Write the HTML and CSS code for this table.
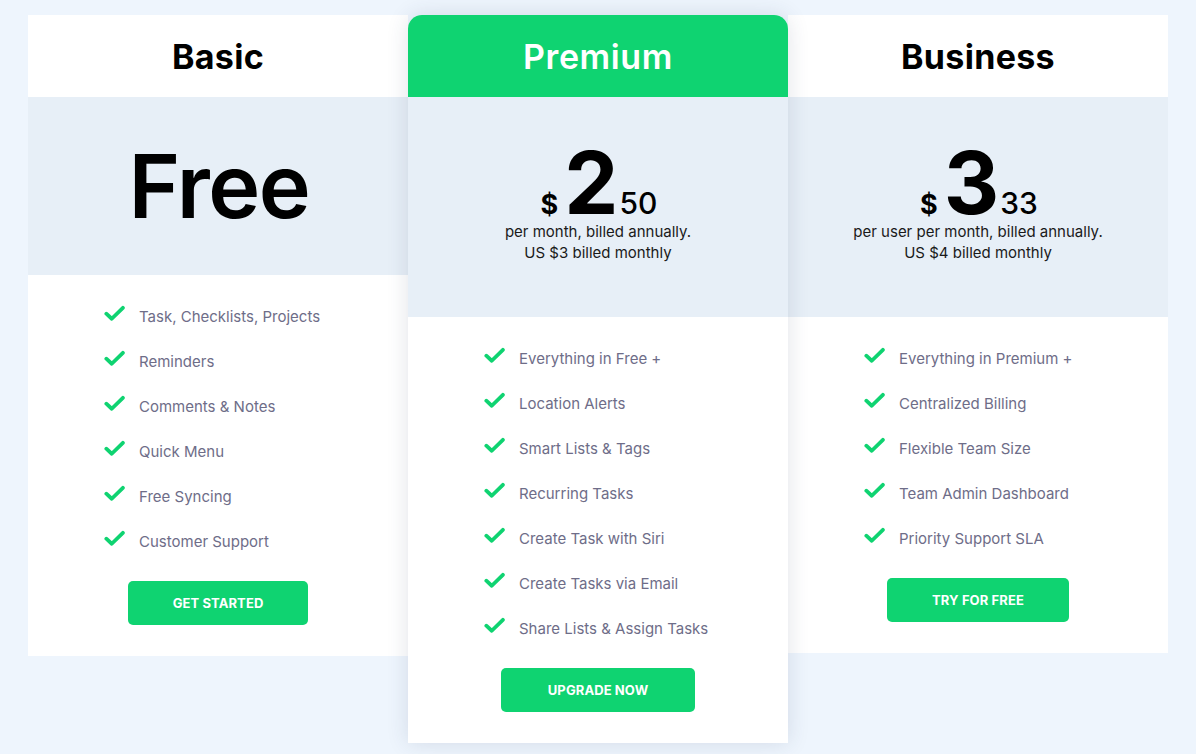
FILE: index.html
```html
<!DOCTYPE html>
<html lang="en">
<head>
<meta charset="utf-8">
<title>Pricing</title>
<link rel="stylesheet" href="styles.css">
</head>
<body>
<div class="pricing">
  <section class="plan plan-basic">
    <header class="plan-head"><h2>Basic</h2></header>
    <div class="price price-short"><div class="free">Free</div></div>
    <div class="plan-body">
      <ul class="features">
        <li><svg class="check" viewBox="0 0 20 16"><polyline points="2.2,8.2 7.4,13 18,2.6"/></svg>Task, Checklists, Projects</li>
        <li><svg class="check" viewBox="0 0 20 16"><polyline points="2.2,8.2 7.4,13 18,2.6"/></svg>Reminders</li>
        <li><svg class="check" viewBox="0 0 20 16"><polyline points="2.2,8.2 7.4,13 18,2.6"/></svg>Comments &amp; Notes</li>
        <li><svg class="check" viewBox="0 0 20 16"><polyline points="2.2,8.2 7.4,13 18,2.6"/></svg>Quick Menu</li>
        <li><svg class="check" viewBox="0 0 20 16"><polyline points="2.2,8.2 7.4,13 18,2.6"/></svg>Free Syncing</li>
        <li><svg class="check" viewBox="0 0 20 16"><polyline points="2.2,8.2 7.4,13 18,2.6"/></svg>Customer Support</li>
      </ul>
      <a class="btn btn-basic" href="#">GET STARTED</a>
    </div>
  </section>

  <section class="plan plan-premium">
    <header class="plan-head"><h2>Premium</h2></header>
    <div class="price">
      <div class="amount"><span class="cur">$</span><span class="int">2</span><span class="dec">50</span></div>
      <p class="note">per month, billed annually.<br>US $3 billed monthly</p>
    </div>
    <div class="plan-body">
      <ul class="features">
        <li><svg class="check" viewBox="0 0 20 16"><polyline points="2.2,8.2 7.4,13 18,2.6"/></svg>Everything in Free +</li>
        <li><svg class="check" viewBox="0 0 20 16"><polyline points="2.2,8.2 7.4,13 18,2.6"/></svg>Location Alerts</li>
        <li><svg class="check" viewBox="0 0 20 16"><polyline points="2.2,8.2 7.4,13 18,2.6"/></svg>Smart Lists &amp; Tags</li>
        <li><svg class="check" viewBox="0 0 20 16"><polyline points="2.2,8.2 7.4,13 18,2.6"/></svg>Recurring Tasks</li>
        <li><svg class="check" viewBox="0 0 20 16"><polyline points="2.2,8.2 7.4,13 18,2.6"/></svg>Create Task with Siri</li>
        <li><svg class="check" viewBox="0 0 20 16"><polyline points="2.2,8.2 7.4,13 18,2.6"/></svg>Create Tasks via Email</li>
        <li><svg class="check" viewBox="0 0 20 16"><polyline points="2.2,8.2 7.4,13 18,2.6"/></svg>Share Lists &amp; Assign Tasks</li>
      </ul>
      <a class="btn btn-premium" href="#">UPGRADE NOW</a>
    </div>
  </section>

  <section class="plan plan-business">
    <header class="plan-head"><h2>Business</h2></header>
    <div class="price">
      <div class="amount"><span class="cur">$</span><span class="int">3</span><span class="dec">33</span></div>
      <p class="note">per user per month, billed annually.<br>US $4 billed monthly</p>
    </div>
    <div class="plan-body">
      <ul class="features">
        <li><svg class="check" viewBox="0 0 20 16"><polyline points="2.2,8.2 7.4,13 18,2.6"/></svg>Everything in Premium +</li>
        <li><svg class="check" viewBox="0 0 20 16"><polyline points="2.2,8.2 7.4,13 18,2.6"/></svg>Centralized Billing</li>
        <li><svg class="check" viewBox="0 0 20 16"><polyline points="2.2,8.2 7.4,13 18,2.6"/></svg>Flexible Team Size</li>
        <li><svg class="check" viewBox="0 0 20 16"><polyline points="2.2,8.2 7.4,13 18,2.6"/></svg>Team Admin Dashboard</li>
        <li><svg class="check" viewBox="0 0 20 16"><polyline points="2.2,8.2 7.4,13 18,2.6"/></svg>Priority Support SLA</li>
      </ul>
      <a class="btn btn-business" href="#">TRY FOR FREE</a>
    </div>
  </section>
</div>
</body>
</html>
```
FILE: styles.css
```css
* { box-sizing: border-box; }
html, body { margin: 0; padding: 0; }
body {
  background: #eef5fd;
  font-family: Inter, "Open Sans", sans-serif;
  color: #000;
  height: 754px;
  overflow: hidden;
}
.pricing {
  display: flex;
  align-items: flex-start;
  padding: 15px 28px 0;
}
.plan {
  width: 380px;
  flex: none;
  background: #fff;
  display: flex;
  flex-direction: column;
}
.plan-premium {
  position: relative;
  z-index: 1;
  border-radius: 14px 14px 0 0;
  box-shadow: 0 0 22px rgba(40, 60, 90, 0.14);
}
.plan-head {
  height: 82px;
  display: flex;
  align-items: center;
  justify-content: center;
}
.plan-head h2 {
  margin: 0;
  font-size: 34px;
  font-weight: 700;
  letter-spacing: 0.3px;
}
.plan-premium .plan-head {
  background: #0fd371;
  border-radius: 14px 14px 0 0;
}
.plan-premium .plan-head h2 { color: #fff; font-weight: 600; letter-spacing: 0.6px; }
.price {
  background: #e7eff7;
  height: 220px;
  display: flex;
  flex-direction: column;
  align-items: center;
  justify-content: center;
  padding-bottom: 2px;
}
.price-short { height: 178px; }
.free {
  font-size: 88px;
  font-weight: 600;
  line-height: 1;
  letter-spacing: -1.5px;
  padding-left: 2px;
  margin-top: 2px;
}
.amount {
  display: flex;
  align-items: baseline;
  line-height: 0.8;
  margin-left: 2px;
}
.cur { font-size: 27px; font-weight: 700; margin-right: 6px; }
.int { font-size: 86px; font-weight: 700; margin-right: 2px; letter-spacing: -1px; }
.dec { font-size: 30px; font-weight: 500; }
.note {
  margin: 3px 0 0;
  font-size: 15px;
  line-height: 21px;
  text-align: center;
  color: #1a1a1a;
}
.plan-body {
  display: flex;
  flex-direction: column;
  align-items: center;
  padding: 19px 0 31px;
}
.features {
  list-style: none;
  margin: 0;
  padding: 0 0 0 76px;
  align-self: stretch;
}
.features li {
  height: 45px;
  display: flex;
  align-items: center;
  font-size: 15px;
  color: #6e6d88;
}
.check {
  width: 21px;
  height: 17px;
  margin-right: 14px;
  margin-top: -6px;
  fill: none;
  stroke: #0fd371;
  stroke-width: 3.6;
  stroke-linecap: round;
  stroke-linejoin: round;
}
.btn {
  display: flex;
  align-items: center;
  justify-content: center;
  height: 44px;
  margin-top: 17px;
  background: #0fd371;
  color: #fff;
  border-radius: 5px;
  text-decoration: none;
  font-size: 13px;
  font-weight: 700;
  letter-spacing: 0.1px;
}
.btn-basic { width: 180px; }
.btn-premium { width: 194px; }
.btn-business { width: 182px; }
```
